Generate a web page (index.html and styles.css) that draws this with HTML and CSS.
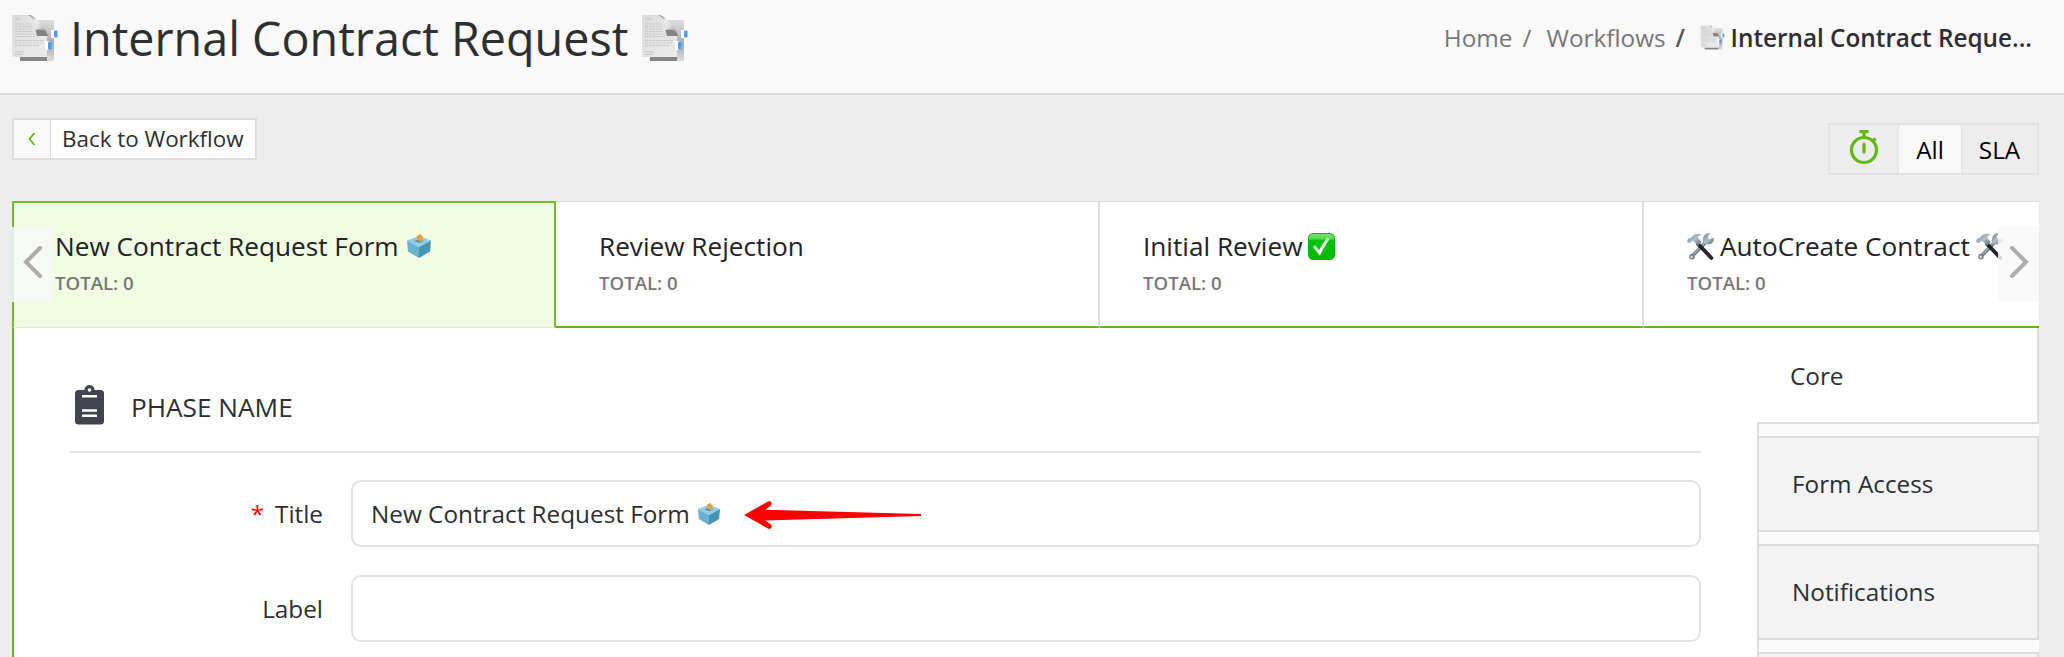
FILE: index.html
```html
<!DOCTYPE html>
<html lang="en">

<head>
    <meta charset="utf-8">
    <meta name="viewport" content="width=device-width, initial-scale=1">
    <title>Internal Contract Request</title>
    <link rel="stylesheet" href="styles.css">
</head>

<body>
    <!-- Shared icons -->
    <svg class="sprite" aria-hidden="true">
        <defs>
            <linearGradient id="paper" x1="0" y1="0" x2="1" y2="1">
                <stop offset="0" stop-color="#dcdcdc" />
                <stop offset="1" stop-color="#ebebeb" />
            </linearGradient>
            <linearGradient id="curl" x1="0" y1="0" x2="1" y2="1">
                <stop offset="0" stop-color="#555" />
                <stop offset=".35" stop-color="#eee" />
                <stop offset=".65" stop-color="#ddd" />
                <stop offset="1" stop-color="#888" />
            </linearGradient>
            <linearGradient id="shade" x1="0" y1="0" x2="0" y2="1">
                <stop offset="0" stop-color="#dedede" />
                <stop offset=".6" stop-color="#aaa" />
                <stop offset="1" stop-color="#ddd" />
            </linearGradient>
            <linearGradient id="steel" x1="0" y1="0" x2="1" y2="1">
                <stop offset="0" stop-color="#6b8196" />
                <stop offset=".5" stop-color="#b4c0ca" />
                <stop offset="1" stop-color="#56616b" />
            </linearGradient>
            <linearGradient id="green" x1="0" y1="0" x2="0" y2="1">
                <stop offset="0" stop-color="#7be07b" />
                <stop offset=".2" stop-color="#56d356" />
                <stop offset=".24" stop-color="#06c406" />
                <stop offset="1" stop-color="#05b605" />
            </linearGradient>
        </defs>
        <symbol id="icon-pages" viewBox="0 0 46 48">
            <path d="M8 43h27v4H8z" fill="#858585" />
            <path d="M22 6h20v41h-7V30z" fill="url(#shade)" />
            <path d="M0 1h17c4 1 6 4 6 12l12 9v21H0z" fill="url(#paper)" />
            <path d="M3 5h6M3 38h9M3 40.500h8" stroke="#c4c4c4" />
            <path d="M3 10h16M3 12.500h17M3 15h17M3 17.500h18M3 20h20M3 22.500h20M3 26.500h29M3 29h28M3 31.500h25" stroke="#cacaca" stroke-dasharray="3 .6" />
            <path d="M23 14c7 0 12 3 13 8H25z" fill="#848484" />
            <path d="M16 1c4 0 8 3 12 8 3 4 5 6 7 9-4-3-8-3-12-2 0-8-1-13-7-15z" fill="url(#curl)" />
            <rect x="39" y="16" width="4" height="8" rx="1" fill="#fff" />
            <rect x="42" y="16.500" width="3.500" height="7" rx="1" fill="#4ba0ee" />
            <rect x="33" y="27" width="4" height="9" rx="1" fill="#fff" />
            <rect x="36" y="28" width="3.500" height="7.500" rx="1" fill="#4ba0ee" />
        </symbol>
        <symbol id="icon-ballot" viewBox="0 0 24 24">
            <path d="M0 6.500L12 2l12 4.500L12 13z" fill="#8fcfe2" />
            <path d="M0 6.500L12 13v11L1 17.500z" fill="#68b2d0" />
            <path d="M24 6.500L12 13v11l11-6.500z" fill="#4795b5" />
            <path d="M7 7l5-2 5 2-5 2z" fill="#5d8da0" />
            <path d="M9.500 2l4-2 2.500 3-1 5-4-1.500z" fill="#eba037" />
        </symbol>
        <symbol id="icon-check" viewBox="0 0 26 26">
            <rect width="26" height="26" rx="5" fill="#05b605" />
            <rect x="1" y="1" width="24" height="24" rx="4" fill="url(#green)" />
            <path d="M4.800 13.500l2-1.800 4 5C13 12 15.500 8 18.500 4.800l2.500.8C17.500 10 14.500 15.500 11.500 22z" fill="#fff" />
        </symbol>
        <symbol id="icon-tools" viewBox="0 0 26 26">
            <path d="M4.800 22.500L19 8" stroke="#69747e" stroke-width="3.400" stroke-linecap="round" />
            <path d="M5 22L19 7.500" stroke="#aab5bd" stroke-width="1.200" />
            <path d="M17.500 1.500c1.500-1.300 3-1.600 5-1.200L20 3.500l1.500 2.800 4.300-2c.4 4-1.800 6.600-5 6.700l-4.600-.8c-1.500-3-1.200-6.500 1.300-8.700z" fill="url(#steel)" />
            <path d="M10.500 10.500L23.500 24" stroke="#23262a" stroke-width="3.600" stroke-linecap="round" />
            <path d="M0 8.500l1-3 3-1C6.500.8 10 0 14 1.200L10.500 4l3.500 5-3.500 3.500L7 8.500 5 7.800 2.500 10z" fill="url(#steel)" />
            <circle cx="4.800" cy="22.800" r="2.700" fill="#79848d" />
            <circle cx="4.500" cy="23" r="1" fill="#f4f4f4" />
        </symbol>
    </svg>

    <header class="page-header">
        <h1 class="page-title">
            <svg class="title-icon"><use href="#icon-pages" /></svg>
            <span class="title-text">Internal Contract Request</span>
            <svg class="title-icon"><use href="#icon-pages" /></svg>
        </h1>
        <nav class="breadcrumb">
            <a class="crumb-home">Home</a>
            <span class="slash">/</span>
            <a class="crumb-workflows">Workflows</a>
            <span class="slash slash-dark">/</span>
            <svg class="crumb-icon"><use href="#icon-pages" /></svg>
            <strong>Internal Contract Reque...</strong>
        </nav>
    </header>

    <div class="toolbar">
        <a class="back-button">
            <span class="back-icon">
                <svg width="8" height="14" viewBox="0 0 8 14"><path d="M6.500 1L1.500 7l5 6" fill="none" stroke="#61b90f" stroke-width="1.800" /></svg>
            </span>
            <span class="back-text">Back to Workflow</span>
        </a>
        <div class="toggle">
            <span class="toggle-item toggle-timer">
                <svg width="30" height="36" viewBox="0 0 30 36" fill="none" stroke="#61b90f">
                    <circle cx="15" cy="21" r="12.500" stroke-width="3.200" />
                    <path d="M10.500 2.600h9M15 3v6M24 12l2.500-2.500" stroke-width="3.200" />
                    <path d="M15 15v8" stroke-width="3.200" stroke-linecap="round" />
                </svg>
            </span>
            <span class="toggle-item toggle-all">All</span>
            <span class="toggle-item toggle-sla">SLA</span>
        </div>
    </div>

    <main class="workflow">
        <div class="phases">
            <div class="phase active">
                <div class="phase-name">New Contract Request Form <svg class="ballot"><use href="#icon-ballot" /></svg></div>
                <div class="phase-total">TOTAL: 0</div>
            </div>
            <div class="phase">
                <div class="phase-name">Review Rejection</div>
                <div class="phase-total">TOTAL: 0</div>
            </div>
            <div class="phase">
                <div class="phase-name">Initial Review <svg class="emoji"><use href="#icon-check" /></svg></div>
                <div class="phase-total">TOTAL: 0</div>
            </div>
            <div class="phase">
                <div class="phase-name"><svg class="emoji"><use href="#icon-tools" /></svg> AutoCreate Contract <svg class="emoji"><use href="#icon-tools" /></svg></div>
                <div class="phase-total">TOTAL: 0</div>
            </div>
            <div class="scroll scroll-left">
                <svg width="20" height="32" viewBox="0 0 20 32"><path d="M17 2L3 16l14 14" /></svg>
            </div>
            <div class="scroll scroll-right">
                <svg width="20" height="32" viewBox="0 0 20 32"><path d="M3 2l14 14L3 30" /></svg>
            </div>
        </div>

        <div class="panel">
            <section class="form">
                <div class="section-head">
                    <svg width="29" height="40" viewBox="0 0 29 40">
                        <rect y="5" width="29" height="34.500" rx="3.500" fill="#41444d" />
                        <circle cx="14.500" cy="5" r="5" fill="#41444d" />
                        <circle cx="14.500" cy="5" r="1.800" fill="#fff" />
                        <path d="M7 11.200h15M7 25.500h15M7 30.700h15" stroke="#fff" stroke-width="2.400" />
                    </svg>
                    <h2>PHASE NAME</h2>
                </div>
                <div class="field">
                    <label><span class="required">*</span>Title</label>
                    <div class="input">
                        <span class="input-text">New Contract Request Form</span>
                        <svg class="input-ballot"><use href="#icon-ballot" /></svg>
                        <!-- Arrow pointing at the title value -->
                        <svg class="arrow" width="178" height="30" viewBox="0 0 178 30">
                            <path d="M0 15L24 1.500c3-1.500 5 2 2.500 4.500L21 9.800 177 14v2L21 20.500l5.500 3.500c2.500 2.500.5 6-2.500 4.500z" fill="#f00" />
                        </svg>
                    </div>
                </div>
                <div class="field">
                    <label>Label</label>
                    <div class="input"></div>
                </div>
            </section>
            <aside class="side-tabs">
                <div class="side-tab current">Core</div>
                <div class="side-tab">Form Access</div>
                <div class="side-tab">Notifications</div>
                <div class="side-tab"></div>
            </aside>
        </div>
    </main>
</body>

</html>
```
FILE: styles.css
```css
* {
    margin: 0;
    padding: 0;
    box-sizing: border-box;
}

html,
body {
    height: 100%;
    overflow: hidden;
}

body {
    display: flex;
    flex-direction: column;
    background: #ededed;
    color: #2d2f31;
    font-family: 'Open Sans', 'Noto Sans', sans-serif;
    font-size: 24.3px;
    white-space: nowrap;
}

svg {
    flex-shrink: 0;
}

.sprite {
    position: absolute;
    width: 0;
    height: 0;
}

/* Header */
.page-header {
    display: flex;
    flex-shrink: 0;
    justify-content: space-between;
    align-items: center;
    height: 95px;
    padding: 0 32px 18px 12px;
    background: #f9f9f9;
    border-bottom: 2px solid #ddd;
}

.page-title {
    display: flex;
    align-items: center;
    font-size: 46.7px;
    font-weight: 400;
}

.title-icon {
    width: 46px;
    height: 48px;
}

.title-text {
    width: 584px;
    padding-left: 12px;
}

.breadcrumb {
    display: flex;
    align-items: center;
    color: #777;
}

.slash {
    width: 24px;
    margin-left: 10px;
}

.slash-dark {
    color: #555;
    font-weight: 600;
}

.crumb-icon {
    width: 25px;
    height: 25px;
    margin-right: 6px;
}

.breadcrumb strong {
    color: #2d2f31;
    font-weight: 600;
}

/* Toolbar */
.toolbar {
    display: flex;
    flex-shrink: 0;
    justify-content: space-between;
    align-items: flex-start;
    height: 106px;
    padding: 23px 25px 0 12px;
}

.back-button {
    display: flex;
    width: 245px;
    height: 42px;
    background: #fff;
    border: 2px solid #ddd;
    font-size: 22.4px;
    line-height: 37px;
}

.back-icon {
    display: flex;
    justify-content: center;
    align-items: center;
    width: 37px;
    background: #f9f9f9;
    border-right: 1px solid #ddd;
}

.back-text {
    padding-left: 11px;
}

.toggle {
    display: flex;
    height: 52px;
    margin-top: 5px;
    border: 2px solid #e2e2e2;
    color: #000;
}

.toggle-item {
    display: flex;
    justify-content: center;
    align-items: center;
}

.toggle-timer {
    width: 69px;
    padding-bottom: 5px;
    border-right: 1px solid #e2e2e2;
}

.toggle-all {
    width: 62px;
    background: #f8f8f8;
}

.toggle-sla {
    width: 76px;
    border-left: 1px solid #e2e2e2;
}

/* Phase strip */
.workflow {
    flex: 1;
    display: flex;
    flex-direction: column;
    min-height: 0;
    margin: 0 25px 0 12px;
}

.phases {
    position: relative;
    display: flex;
    flex-shrink: 0;
    height: 127px;
    overflow: hidden;
    background: #fff;
}

.phase {
    flex: 0 0 544px;
    padding: 26px 0 0 43px;
    border-top: 1px solid #ddd;
    border-right: 2px solid #ddd;
    border-bottom: 2px solid #61b90f;
    color: #212325;
}

.phase.active {
    padding-top: 25px;
    padding-left: 41px;
    background: #f2fce3;
    border: 2px solid #6fbc2c;
    border-bottom: 1px solid #e5e5e5;
}

.phase-name {
    display: flex;
    align-items: center;
    gap: 6px;
    height: 36px;
    font-size: 26.2px;
}

.phase-total {
    height: 37px;
    color: #777;
    font-size: 18.6px;
    font-weight: 600;
    line-height: 37px;
}

.ballot {
    width: 24px;
    height: 26px;
    margin-left: 2px;
}

.emoji {
    width: 27px;
    height: 27px;
}

.scroll {
    position: absolute;
    top: 26px;
    display: flex;
    justify-content: center;
    align-items: center;
    width: 41px;
    height: 75px;
    padding-bottom: 6px;
    background: rgba(248, 248, 248, 0.85);
}

.scroll path {
    fill: none;
    stroke: #adadad;
    stroke-width: 4;
    stroke-linecap: round;
}

.scroll-left {
    left: 0;
}

.scroll-right {
    right: 0;
}

/* Form panel */
.panel {
    display: flex;
    flex: 1;
    min-height: 0;
    overflow: hidden;
    background: #fff;
    border-left: 2px solid #61b90f;
}

.form {
    width: 1743px;
    padding: 34px 56px 0 56px;
}

.section-head {
    display: flex;
    align-items: center;
    height: 91px;
    margin-bottom: 27px;
    padding: 0 0 4px 5px;
    border-bottom: 2px solid #e2e2e2;
}

.section-head h2 {
    padding: 5px 0 0 27px;
    font-size: 26.2px;
    font-weight: 400;
}

.field {
    display: flex;
    align-items: center;
    height: 67px;
    margin-bottom: 28px;
}

.field label {
    width: 253px;
    text-align: right;
}

.required {
    margin-right: 11px;
    color: #f00;
}

.input {
    display: flex;
    flex: 1;
    align-items: center;
    height: 67px;
    margin-left: 28px;
    padding-left: 18px;
    border: 2px solid #e2e2e2;
    border-radius: 10px;
}

.input-ballot {
    width: 22px;
    height: 24px;
    margin-left: 8px;
}

.arrow {
    margin: 2px 0 0 24px;
}

/* Side tabs */
.side-tabs {
    flex: 1;
    display: flex;
    flex-direction: column;
    gap: 12px;
    background: linear-gradient(#ddd, #ddd) 0 95px / 2px 100% no-repeat #fbfbfb;
}

.side-tab {
    flex-shrink: 0;
    height: 96px;
    padding-left: 33px;
    background: #f3f3f3;
    border: 2px solid #dcdcdc;
    line-height: 92px;
}

.side-tab.current {
    padding-left: 33px;
    background: #fff;
    border-top: 0;
    border-left: 0;
    line-height: 95px;
}
```
